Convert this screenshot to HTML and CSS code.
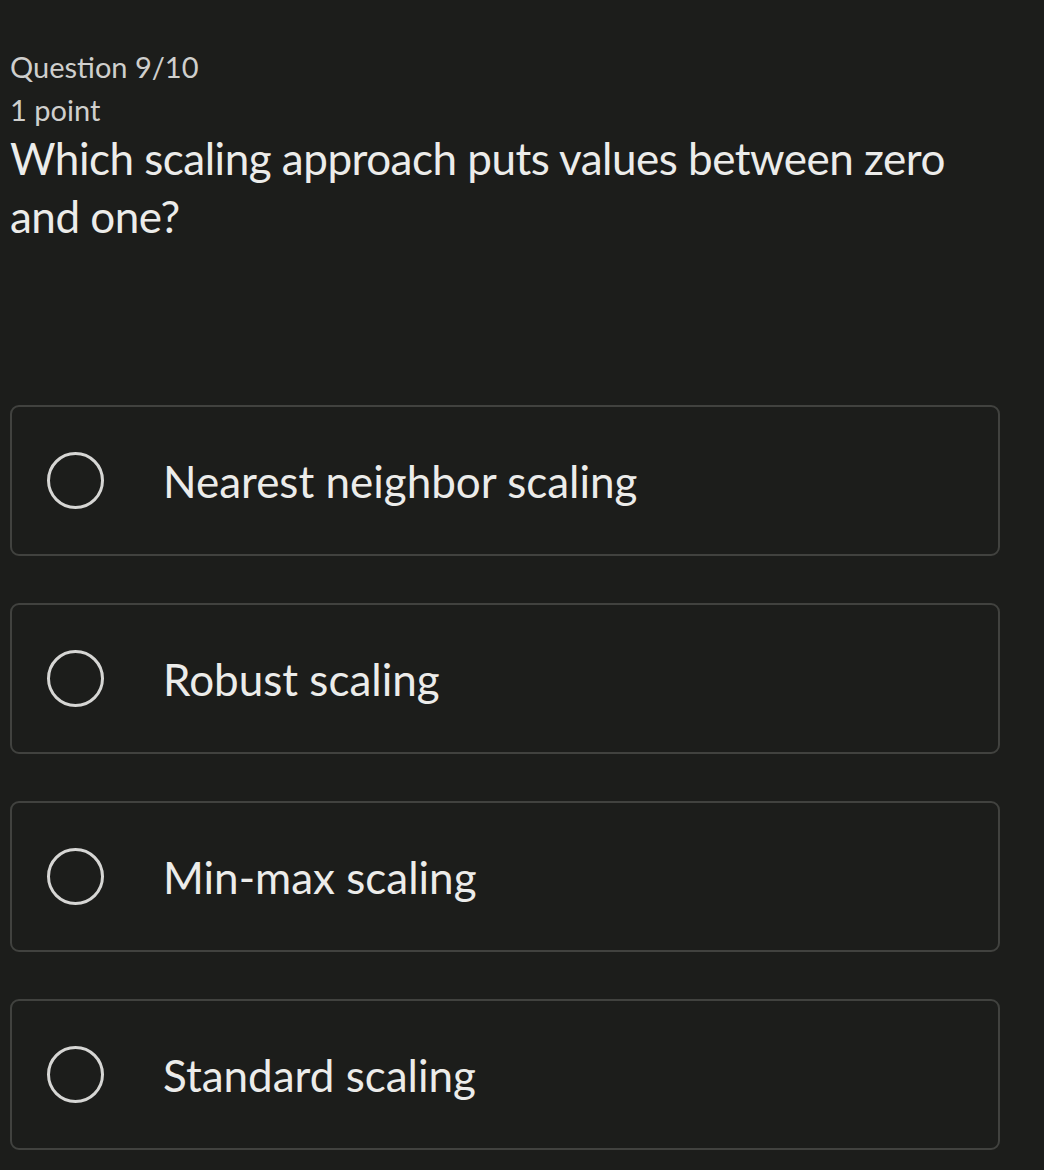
FILE: index.html
```html
<!DOCTYPE html>
<html>
<head>
<meta charset="utf-8">
<link rel="stylesheet" href="styles.css">
</head>
<body>
<main class="quiz">
  <div class="meta">Question 9/10</div>
  <div class="meta points">1 point</div>
  <h1 class="question">Which scaling approach puts values between zero and one?</h1>
  <div class="options">
    <label class="option"><span class="radio"></span><span class="label">Nearest neighbor scaling</span></label>
    <label class="option"><span class="radio"></span><span class="label">Robust scaling</span></label>
    <label class="option"><span class="radio"></span><span class="label">Min-max scaling</span></label>
    <label class="option"><span class="radio"></span><span class="label">Standard scaling</span></label>
  </div>
</main>
</body>
</html>
```

FILE: styles.css
```css
html, body {
  margin: 0;
  padding: 0;
  background: #1c1d1b;
}
body {
  font-family: Lato, "Noto Sans", sans-serif;
  color: #e9e9e7;
}
.quiz {
  width: 990px;
  padding: 45px 0 0 10px;
}
.meta {
  font-size: 29px;
  line-height: 43px;
  color: #cfcfcd;
}
.question {
  margin: -2px 0 0 0;
  font-size: 44px;
  line-height: 58px;
  letter-spacing: -0.5px;
  font-weight: 400;
  color: #ececea;
  width: 980px;
}
.options {
  margin-top: 160px;
  display: flex;
  flex-direction: column;
  gap: 47px;
}
.option {
  box-sizing: border-box;
  height: 151px;
  border: 2px solid #41423f;
  border-radius: 9px;
  display: flex;
  align-items: center;
  padding-left: 35px;
}
.radio {
  box-sizing: border-box;
  width: 57px;
  height: 57px;
  border: 3px solid #d6d6d4;
  border-radius: 50%;
  flex: none;
}
.label {
  margin-left: 59px;
  font-size: 44px;
  color: #ececea;
}
```
